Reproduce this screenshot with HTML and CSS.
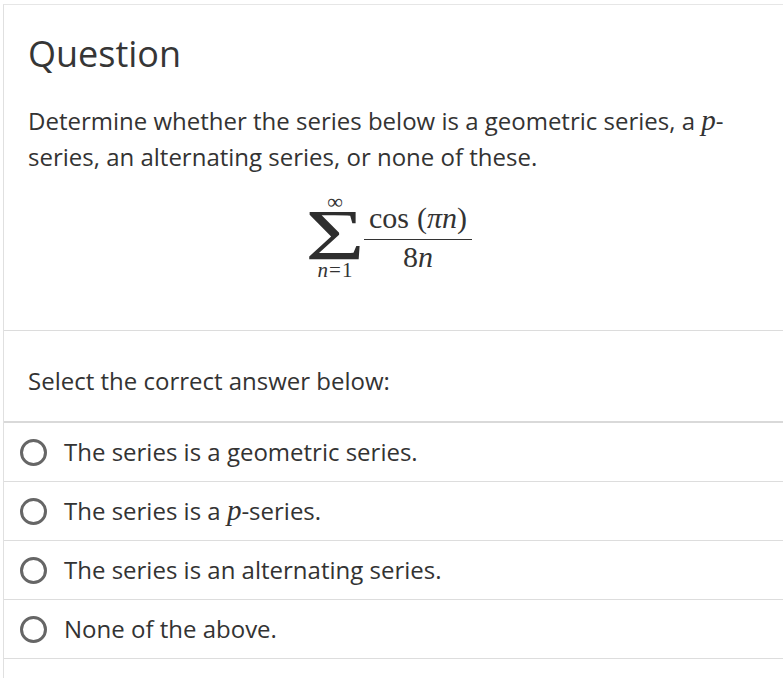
FILE: index.html
```html
<!DOCTYPE html>
<html lang="en">
<head>
<meta charset="utf-8">
<title>Question</title>
<link rel="stylesheet" href="styles.css">
</head>
<body>
<div class="card">
  <section class="question">
    <h1 class="title">Question</h1>
    <p class="prompt">Determine whether the series below is a geometric series, a <span class="mi">p</span>-series, an alternating series, or none of these.</p>
    <div class="display">
      <div class="sum">
        <span class="sup">∞</span>
        <span class="sigma">Σ</span>
        <span class="sub"><span class="mi">n</span><span class="eq">=</span>1</span>
      </div>
      <div class="frac">
        <span class="num">cos<span class="thin"></span>(<span class="mi">πn</span>)</span>
        <span class="bar"></span>
        <span class="den">8<span class="mi">n</span></span>
      </div>
    </div>
  </section>
  <section class="instruct">
    <p class="label">Select the correct answer below:</p>
  </section>
  <ul class="options">
    <li class="option"><span class="radio"></span><span class="text">The series is a geometric series.</span></li>
    <li class="option"><span class="radio"></span><span class="text">The series is a <span class="mi">p</span>-series.</span></li>
    <li class="option"><span class="radio"></span><span class="text">The series is an alternating series.</span></li>
    <li class="option"><span class="radio"></span><span class="text">None of the above.</span></li>
  </ul>
</div>
</body>
</html>
```

FILE: styles.css
```css
html, body {
  margin: 0;
  padding: 0;
  background: #ffffff;
}

body {
  font-family: "Open Sans", "Noto Sans", sans-serif;
  color: #333333;
  font-size: 24px;
  line-height: 36px;
}

.card {
  margin: 4px 0 0 3px;
  padding-bottom: 30px;
  border-top: 1px solid #e6e6e6;
  border-left: 1px solid #e0e0e0;
}

.question {
  padding: 25px 25px 50px 24px;
  border-bottom: 1px solid #dcdcdc;
}

.title {
  margin: 0;
  font-size: 36px;
  line-height: 48px;
  font-weight: 400;
  color: #363636;
}

.prompt {
  margin: 25px 0 0 0;
}

.mi {
  font-family: "Liberation Serif", "DejaVu Serif", serif;
  font-style: italic;
}

.prompt .mi,
.text .mi {
  font-size: 29px;
  line-height: 1;
}

.display {
  margin-top: 20px;
  display: flex;
  justify-content: center;
  align-items: center;
  font-family: "Liberation Serif", "DejaVu Serif", serif;
  color: #333333;
}

.sum {
  display: flex;
  flex-direction: column;
  align-items: center;
  margin-right: 8px;
}

.sup {
  font-size: 22px;
  line-height: 14px;
  height: 14px;
}

.sigma {
  font-size: 72px;
  line-height: 53px;
  height: 51px;
  transform: scaleX(1.42);
  color: #2e2e2e;
}

.sub {
  font-size: 21px;
  line-height: 20px;
  height: 20px;
}

.sub .mi {
  font-size: 21px;
}

.eq {
  padding: 0 1px;
}

.frac {
  display: flex;
  flex-direction: column;
  align-items: center;
}

.num, .den {
  font-size: 30px;
  line-height: 34px;
  padding: 0 5px;
}

.num {
  padding-bottom: 4px;
}

.thin {
  display: inline-block;
  width: 8px;
}

.bar {
  align-self: stretch;
  height: 1px;
  background: #333333;
}

.instruct {
  padding: 32px 24px 22px 24px;
  border-bottom: 2px solid #d9d9d9;
}

.label {
  margin: 0;
}

.options {
  list-style: none;
  margin: 0;
  padding: 0;
}

.option {
  display: flex;
  align-items: center;
  height: 58px;
  border-bottom: 1px solid #dddddd;
  padding-left: 16px;
}

.radio {
  box-sizing: border-box;
  width: 27px;
  height: 27px;
  border: 3px solid #666666;
  border-radius: 50%;
  margin-right: 17px;
  flex: none;
}
```
